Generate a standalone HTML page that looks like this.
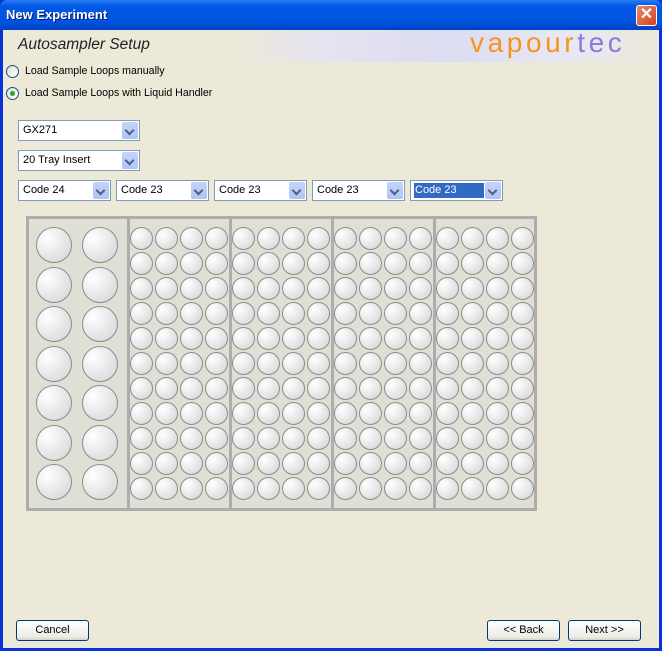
<!DOCTYPE html>
<html><head><style>
*{margin:0;padding:0;box-sizing:border-box}
body{width:662px;height:651px;overflow:hidden;background:#0831d9;font-family:"Liberation Sans",Tahoma,sans-serif;font-size:11px;position:relative}
#tb{position:absolute;left:0;top:0;width:662px;height:30px;background:linear-gradient(#2a7cf0,#0058e6 20%,#0055e0 70%,#0042c4);border-radius:7px 7px 0 0}
#tb span{position:absolute;left:6px;top:7px;color:#fff;font-weight:bold;font-size:13px;text-shadow:1px 1px #0a1e6e}
#cl{position:absolute;left:636px;top:5px;width:21px;height:21px;background:linear-gradient(135deg,#e88b6e,#d4411d);border:1px solid #fff;border-radius:3px;color:#fff;font-size:16px;font-weight:bold;text-align:center;line-height:18px}
#c{position:absolute;left:3px;top:30px;width:656px;height:618px;background:#ece9d8}
#ban{position:absolute;left:227px;top:0;width:429px;height:32px;background:linear-gradient(90deg,#ece9d8,#e6e4ef 20%,#dcdcf2 50%,#e8e8f4 80%,#ece9d8);}
.abs{position:absolute}
.t{font-size:10.6px}
.dd{position:absolute;height:21px;background:#fff;border:1px solid #7f9db9}
.dd span{position:absolute;left:4px;top:3px;font-size:11px}
.dd i{position:absolute;right:1px;top:1px;width:16px;height:17px;background:linear-gradient(#c6d3f7,#b0c4f5);border-radius:2px}
.dd i:after{content:"";position:absolute;left:4px;top:5px;width:5px;height:5px;border-right:2px solid #4d6185;border-bottom:2px solid #4d6185;transform:rotate(45deg)}
.btn{position:absolute;height:21px;border:1px solid #003c74;border-radius:3px;background:linear-gradient(#fff,#ecebe6 85%,#d6d0c5);text-align:center;line-height:19px;font-size:11px}
.rad{position:absolute;width:13px;height:13px;border:1px solid #1c5180;border-radius:50%;background:linear-gradient(135deg,#dcdcd6,#fff)}
.sec{position:absolute;top:216px;height:295px;background:#e0dfd6;border:3px solid #adadad}
.ci{position:absolute;border-radius:50%;border:1.5px solid #8c8c8c;background:radial-gradient(circle at 30% 30%,#fff,#e4e4e4 60%,#d2d2d2)}
</style></head><body>
<div id="tb"><span>New Experiment</span><div id="cl">✕</div></div>
<div id="c">
<div id="ban"></div>
<div class="abs" style="left:15px;top:6px;font-size:15.5px;font-style:italic;color:#222">Autosampler Setup</div>
<div class="abs" style="left:467px;top:-3px;font-size:28px;letter-spacing:3.6px"><span style="color:#f7941d">vapour</span><span style="color:#8a7ae0">tec</span></div>
</div>
<div class="rad" style="left:6px;top:65px"></div>
<div class="abs t" style="left:25px;top:65px">Load Sample Loops manually</div>
<div class="rad" style="left:6px;top:87px"><div style="position:absolute;left:3px;top:3px;width:5px;height:5px;border-radius:50%;background:#2fa12f"></div></div>
<div class="abs t" style="left:25px;top:87px">Load Sample Loops with Liquid Handler</div>
<div class="dd" style="left:18px;top:120px;width:122px"><span>GX271</span><i></i></div>
<div class="dd" style="left:18px;top:150px;width:122px"><span>20 Tray Insert</span><i></i></div>
<div class="dd" style="left:18px;top:180px;width:93px"><span>Code 24</span><i></i></div>
<div class="dd" style="left:116px;top:180px;width:93px"><span>Code 23</span><i></i></div>
<div class="dd" style="left:214px;top:180px;width:93px"><span>Code 23</span><i></i></div>
<div class="dd" style="left:312px;top:180px;width:93px"><span>Code 23</span><i></i></div>
<div class="dd" style="left:410px;top:180px;width:93px"><span style="background:#316ac5;color:#fff;left:3px;top:2px;width:70px;height:15px;padding:1px 1px">Code 23</span><i></i></div>
<div id="tray"></div>
<div class="btn" style="left:16px;top:620px;width:73px">Cancel</div>
<div class="btn" style="left:487px;top:620px;width:73px">&lt;&lt; Back</div>
<div class="btn" style="left:568px;top:620px;width:73px">Next &gt;&gt;</div>
<script>
var h='';
var xs=[26,127,229,331,433];
h+='<div class="sec" style="left:26px;width:104px"></div>';
for(var s=1;s<5;s++)h+='<div class="sec" style="left:'+xs[s]+'px;width:'+(s==4?104:105)+'px"></div>';
for(var r=0;r<7;r++)for(var c=0;c<2;c++){var cx=53.5+c*46.5,cy=245+r*39.5;h+='<div class="ci" style="left:'+(cx-18)+'px;top:'+(cy-18)+'px;width:36px;height:36px"></div>';}
for(var s=1;s<5;s++)for(var r=0;r<11;r++)for(var c=0;c<4;c++){var cx=xs[s]+14.5+c*25,cy=238.5+r*25;h+='<div class="ci" style="left:'+(cx-11.5)+'px;top:'+(cy-11.5)+'px;width:23px;height:23px"></div>';}
document.getElementById('tray').innerHTML=h;
</script>
</body></html>
